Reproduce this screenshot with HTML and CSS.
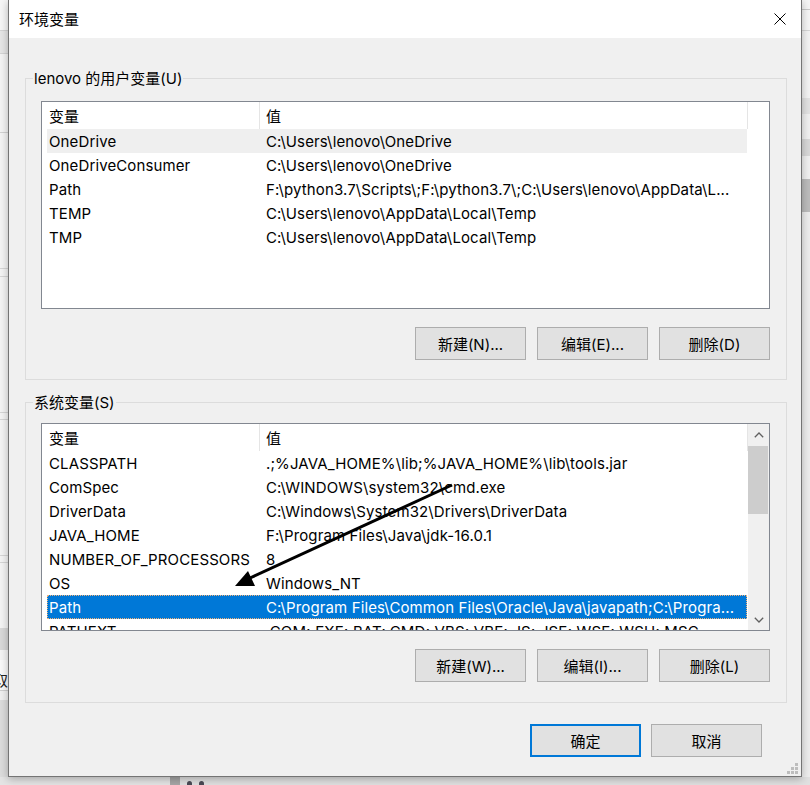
FILE: index.html
```html
<!DOCTYPE html>
<html lang="zh-CN">
<head>
<meta charset="utf-8">
<title>环境变量</title>
<link rel="stylesheet" href="styles.css">
</head>
<body>
<div class="bg-left"><div class="bg-left-text">取</div></div>
<div class="bg-right"></div>
<div class="bg-bottom"><span class="bg-dot"></span><span class="bg-dot"></span></div>

<div class="dialog">
  <div class="titlebar">
    <span class="title">环境变量</span>
    <svg class="close" width="12" height="12" viewBox="0 0 12 12"><path d="M0.5 0.5L11.5 11.5M11.5 0.5L0.5 11.5" stroke="#000" stroke-width="1" fill="none"/></svg>
  </div>

  <div class="group group-user">
    <div class="group-label">lenovo 的用户变量(U)</div>
    <div class="list list-user">
      <div class="list-main">
        <div class="list-head"><div class="hc c1">变量</div><div class="hc c2">值</div></div>
        <div class="row hot"><div class="cell c1">OneDrive</div><div class="cell c2">C:\Users\lenovo\OneDrive</div></div>
        <div class="row"><div class="cell c1">OneDriveConsumer</div><div class="cell c2">C:\Users\lenovo\OneDrive</div></div>
        <div class="row"><div class="cell c1">Path</div><div class="cell c2">F:\python3.7\Scripts\;F:\python3.7\;C:\Users\lenovo\AppData\L...</div></div>
        <div class="row"><div class="cell c1">TEMP</div><div class="cell c2">C:\Users\lenovo\AppData\Local\Temp</div></div>
        <div class="row"><div class="cell c1">TMP</div><div class="cell c2">C:\Users\lenovo\AppData\Local\Temp</div></div>
      </div>
    </div>
    <div class="btn-row">
      <button class="btn">新建(N)...</button>
      <button class="btn">编辑(E)...</button>
      <button class="btn">删除(D)</button>
    </div>
  </div>

  <div class="group group-sys">
    <div class="group-label">系统变量(S)</div>
    <div class="list list-sys">
      <div class="list-main">
        <div class="list-head"><div class="hc c1">变量</div><div class="hc c2">值</div></div>
        <div class="row"><div class="cell c1">CLASSPATH</div><div class="cell c2">.;%JAVA_HOME%\lib;%JAVA_HOME%\lib\tools.jar</div></div>
        <div class="row"><div class="cell c1">ComSpec</div><div class="cell c2">C:\WINDOWS\system32\cmd.exe</div></div>
        <div class="row"><div class="cell c1">DriverData</div><div class="cell c2">C:\Windows\System32\Drivers\DriverData</div></div>
        <div class="row"><div class="cell c1">JAVA_HOME</div><div class="cell c2">F:\Program Files\Java\jdk-16.0.1</div></div>
        <div class="row"><div class="cell c1">NUMBER_OF_PROCESSORS</div><div class="cell c2">8</div></div>
        <div class="row"><div class="cell c1">OS</div><div class="cell c2">Windows_NT</div></div>
        <div class="row selected"><div class="cell c1">Path</div><div class="cell c2">C:\Program Files\Common Files\Oracle\Java\javapath;C:\Progra...</div></div>
        <div class="row"><div class="cell c1">PATHEXT</div><div class="cell c2">.COM;.EXE;.BAT;.CMD;.VBS;.VBE;.JS;.JSE;.WSF;.WSH;.MSC</div></div>
      </div>
      <div class="scrollbar">
        <div class="sb-btn"><svg width="10" height="6" viewBox="0 0 10 6"><path d="M0.8 5.2L5 1L9.2 5.2" stroke="#606060" stroke-width="1.3" fill="none"/></svg></div>
        <div class="sb-thumb"></div>
        <div class="sb-track"></div>
        <div class="sb-btn"><svg width="10" height="6" viewBox="0 0 10 6"><path d="M0.8 0.8L5 5L9.2 0.8" stroke="#606060" stroke-width="1.3" fill="none"/></svg></div>
      </div>
    </div>
    <div class="btn-row">
      <button class="btn">新建(W)...</button>
      <button class="btn">编辑(I)...</button>
      <button class="btn">删除(L)</button>
    </div>
  </div>

  <div class="footer">
    <button class="btn btn-default">确定</button>
    <button class="btn">取消</button>
  </div>
</div>

<svg class="grip" width="12" height="12" viewBox="0 0 12 12">
  <rect x="8" y="0" width="3" height="3" fill="#bdbdbd"/>
  <rect x="4" y="4" width="3" height="3" fill="#bdbdbd"/>
  <rect x="8" y="4" width="3" height="3" fill="#bdbdbd"/>
  <rect x="0" y="8" width="3" height="3" fill="#bdbdbd"/>
  <rect x="4" y="8" width="3" height="3" fill="#bdbdbd"/>
  <rect x="8" y="8" width="3" height="3" fill="#bdbdbd"/>
</svg>

<svg class="arrow" width="810" height="785" viewBox="0 0 810 785">
  <line x1="452" y1="485" x2="250" y2="578" stroke="#000" stroke-width="3"/>
  <polygon points="235,586 248,571 255,586" fill="#000"/>
</svg>
</body>
</html>
```
FILE: styles.css
```css
html, body {
  margin: 0;
  padding: 0;
}
body {
  position: relative;
  width: 810px;
  height: 785px;
  overflow: hidden;
  background: #ececec;
  font-family: "Inter", "Noto Sans CJK SC", sans-serif;
  font-size: 15px;
  color: #000;
}

/* background windows behind the dialog */
.bg-left {
  position: absolute;
  left: 0;
  top: 0;
  width: 8px;
  height: 785px;
  overflow: hidden;
  background: linear-gradient(to bottom,
    #f6f6f6 0 30px, #d4d4d4 30px 31px, #e6e6e6 31px 53px, #d4d4d4 53px 54px,
    #f4f4f4 54px 132px, #d2d2d2 132px 133px, #f4f4f4 133px 268px, #d6d6d6 268px 269px,
    #f4f4f4 269px 276px, #d6d6d6 276px 277px, #f4f4f4 277px 412px, #d6d6d6 412px 413px,
    #f4f4f4 413px 419px, #d6d6d6 419px 420px, #f4f4f4 420px 555px, #d6d6d6 555px 556px,
    #f4f4f4 556px 562px, #d6d6d6 562px 563px, #f4f4f4 563px 628px, #d9d9d9 628px 650px,
    #f4f4f4 650px 660px, #fafafa 660px 690px, #cfcfcf 690px 691px, #f0f0f0 691px 700px,
    #dcdcdc 700px);
}
.bg-left-text {
  margin-top: 671px;
  margin-left: -7px;
  line-height: 20px;
  color: #222;
}
.bg-right {
  position: absolute;
  left: 802px;
  top: 0;
  width: 8px;
  height: 777px;
  background: linear-gradient(to bottom,
    #f5f5f5 0 9px, #c9c9c9 9px 10px, #f5f5f5 10px 30px, #d6d6d6 30px 31px,
    #f3f3f3 31px 98px, #e2e2e2 98px 114px, #f0f0f0 114px 139px, #d8d8d8 139px 156px,
    #f0f0f0 156px 179px, #bcbcbc 179px 212px, #ededed 212px);
}
.bg-bottom {
  position: absolute;
  left: 0;
  top: 777px;
  width: 810px;
  height: 8px;
  display: flex;
  align-items: flex-end;
  background: linear-gradient(to right, #e4e4e4 0 170px, #a6a6a6 170px 180px, #e0e0e0 180px);
}
.bg-dot {
  width: 5px;
  height: 4px;
  border-radius: 3px 3px 0 0;
  background: #4a4a55;
  margin-left: 7px;
}
.bg-dot:first-child {
  margin-left: 187px;
}

/* dialog window */
.dialog {
  position: relative;
  z-index: 1;
  margin-left: 8px;
  width: 794px;
  height: 777px;
  box-sizing: border-box;
  border: 1px solid #747474;
  border-top: none;
  background: #f0f0f0;
  box-shadow: 0 2px 8px rgba(0, 0, 0, 0.28);
}
.titlebar {
  height: 38px;
  background: #fff;
  display: flex;
  align-items: center;
  padding-left: 10px;
  padding-right: 15px;
}
.title {
  flex: 1;
  font-family: "Noto Sans CJK SC", sans-serif;
  font-size: 15px;
  line-height: 20px;
}
.close {
  display: block;
}

/* group boxes */
.group {
  margin: 40px 14px 0 16px;
  border: 1px solid #dcdcdc;
  padding: 0 16px 19px 15px;
}
.group-sys {
  margin-top: 22px;
  padding-bottom: 20px;
}
.group-label {
  width: fit-content;
  height: 20px;
  line-height: 20px;
  margin: -10px 0 0 -8px;
  padding: 0 1px;
  background: #f0f0f0;
  white-space: nowrap;
}

/* list views */
.list {
  height: 208px;
  box-sizing: border-box;
  border: 1px solid #828790;
  background: #fff;
  display: flex;
  overflow: hidden;
}
.list-user { margin-top: 12px; }
.list-sys { margin-top: 10px; }
.list-main {
  width: 706px;
  flex: none;
}
.list-head {
  display: flex;
  height: 27px;
}
.hc {
  box-sizing: border-box;
  height: 27px;
  line-height: 29px;
  border-right: 1px solid #e5e5e5;
  white-space: nowrap;
}
.hc.c1 { width: 218px; padding-left: 7px; }
.hc.c2 { width: 488px; padding-left: 6px; }

.row {
  display: flex;
  height: 24px;
  width: 700px;
  margin-left: 5px;
  box-sizing: border-box;
  white-space: nowrap;
  letter-spacing: 0.12px;
}
.cell {
  box-sizing: border-box;
  height: 24px;
  padding-top: 2px;
  line-height: 22px;
  overflow: hidden;
  text-overflow: ellipsis;
}
.cell.c1 { width: 212px; padding-left: 2px; }
.cell.c2 { width: 488px; padding-left: 7px; }
.row.hot { background: #efefef; }
.row.selected {
  background: #0078d7;
  color: #fff;
  outline: 1px dotted #f2b27a;
  outline-offset: -1px;
}

/* scrollbar */
.scrollbar {
  width: 21px;
  flex: none;
  background: #f0f0f0;
  display: flex;
  flex-direction: column;
}
.sb-btn {
  height: 21px;
  flex: none;
  display: flex;
  align-items: center;
  justify-content: center;
}
.sb-btn svg { display: block; }
.sb-thumb {
  height: 68px;
  margin: 1px 1px 0 0;
  background: #cdcdcd;
  flex: none;
}
.sb-track { flex: 1; }

/* buttons */
.btn-row {
  display: flex;
  justify-content: flex-end;
  gap: 11px;
  margin-top: 18px;
}
.btn {
  width: 111px;
  height: 33px;
  box-sizing: border-box;
  margin: 0;
  padding: 2px 0 0;
  border: 1px solid #adadad;
  background: #e1e1e1;
  font-family: "Inter", "Noto Sans CJK SC", sans-serif;
  font-size: 15px;
  color: #000;
  line-height: 29px;
  white-space: nowrap;
}
.btn-default {
  border: 2px solid #0078d7;
  line-height: 27px;
}
.footer {
  display: flex;
  justify-content: flex-end;
  gap: 10px;
  margin: 21px 39px 0 0;
}

.grip {
  position: absolute;
  left: 787px;
  top: 763px;
  z-index: 2;
}
.arrow {
  position: absolute;
  left: 0;
  top: 0;
  z-index: 3;
  pointer-events: none;
}
```
